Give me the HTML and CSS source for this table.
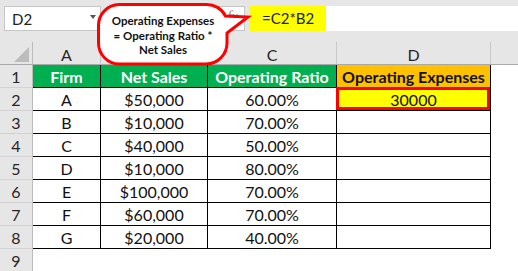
FILE: index.html
```html
<!DOCTYPE html>
<html>
<head>
<meta charset="utf-8">
<link rel="stylesheet" href="styles.css">
</head>
<body>
<div class="app">
  <div class="fbar">
    <div class="namebox"><span class="nb-text">D2</span><span class="caret"></span></div>
    <div class="fxbox"><span class="fx">fx</span></div>
    <div class="finput"><span class="formula">=C2*B2</span></div>
  </div>
  <div class="sheet">
    <div class="corner"><span class="tri"></span></div>
    <div class="ch">A</div><div class="ch">B</div><div class="ch">C</div><div class="ch">D</div><div class="ch ch-last"></div>

    <div class="rh">1</div>
    <div class="c hg">Firm</div><div class="c hg">Net Sales</div><div class="c hg">Operating Ratio</div><div class="c ho">Operating Expenses</div><div class="e"></div>

    <div class="rh">2</div>
    <div class="c">A</div><div class="c">$50,000</div><div class="c">60.00%</div><div class="c sel">30000</div><div class="e"></div>
    <div class="rh">3</div>
    <div class="c">B</div><div class="c">$10,000</div><div class="c">70.00%</div><div class="c"></div><div class="e"></div>
    <div class="rh">4</div>
    <div class="c">C</div><div class="c">$40,000</div><div class="c">50.00%</div><div class="c"></div><div class="e"></div>
    <div class="rh">5</div>
    <div class="c">D</div><div class="c">$10,000</div><div class="c">80.00%</div><div class="c"></div><div class="e"></div>
    <div class="rh">6</div>
    <div class="c">E</div><div class="c">$100,000</div><div class="c">70.00%</div><div class="c"></div><div class="e"></div>
    <div class="rh">7</div>
    <div class="c">F</div><div class="c">$60,000</div><div class="c">70.00%</div><div class="c"></div><div class="e"></div>
    <div class="rh">8</div>
    <div class="c">G</div><div class="c">$20,000</div><div class="c">40.00%</div><div class="c"></div><div class="e"></div>
    <div class="rh">9</div>
    <div class="e"></div><div class="e"></div><div class="e"></div><div class="e"></div><div class="e"></div>
  </div>
  <div class="callout">
    <svg class="bubble" width="160" height="70" viewBox="94 0 160 70">
      <path d="M119 4.5 H206 A21 21 0 0 1 225.5 16 L248 17 L227 33 V43 A21 21 0 0 1 206 64 H119 A21 21 0 0 1 98.5 43 V25 A21 21 0 0 1 119 4.5 Z" fill="#fff" stroke="#ff0000" stroke-width="3" stroke-linejoin="miter"/>
    </svg>
    <div class="callout-text">Operating Expenses<br>= Operating Ratio *<br>Net Sales</div>
  </div>
</div>
</body>
</html>
```
FILE: styles.css
```css
html, body {
  margin: 0;
  padding: 0;
}
body {
  width: 518px;
  height: 271px;
  overflow: hidden;
  background: #ffffff;
  font-family: Lato, "Liberation Sans", sans-serif;
}
.app {
  position: relative;
  width: 518px;
  height: 271px;
  overflow: hidden;
}
.fbar {
  height: 42px;
  box-sizing: border-box;
  padding: 6px 0 11px 4px;
  background: #e6e6e6;
  display: flex;
  align-items: stretch;
}
.namebox {
  width: 97px;
  background: #fff;
  border: 1px solid #c6c6c6;
  box-sizing: border-box;
  display: flex;
  align-items: center;
  justify-content: space-between;
  padding: 0 4px 0 7px;
  font-size: 15px;
  color: #222;
}
.caret {
  width: 0;
  height: 0;
  border-left: 3px solid transparent;
  border-right: 3px solid transparent;
  border-top: 4px solid #555;
  margin-top: -4px;
}
.fxbox {
  width: 40px;
  margin-left: 104px;
  background: #fff;
  border: 1px solid #c6c6c6;
  box-sizing: border-box;
  display: flex;
  align-items: center;
  justify-content: flex-end;
  padding-right: 6px;
}
.fx {
  font-family: "Liberation Serif", serif;
  font-style: italic;
  font-size: 15px;
  color: #8a8a8a;
  margin-top: -4px;
}
.finput {
  flex: 1;
  margin-left: 4px;
  background: #fff;
  display: flex;
}
.formula {
  width: 77px;
  background: #ffff00;
  box-sizing: border-box;
  padding-left: 13px;
  font-size: 15px;
  line-height: 25px;
  color: #222;
}
.sheet {
  display: grid;
  grid-template-columns: 33px 68px 107px 129px 154px 27px;
  grid-auto-rows: 23px;
  font-size: 16px;
}
.corner {
  background: #e6e6e6;
  border-right: 1px solid #bcbcbc;
  border-bottom: 1px solid #a9a9a9;
  box-sizing: border-box;
  display: flex;
  align-items: flex-end;
  justify-content: flex-end;
  padding: 0 3px 2px 0;
}
.tri {
  width: 15px;
  height: 15px;
  background: #bcbcbc;
  clip-path: polygon(100% 0, 100% 100%, 0 100%);
}
.ch {
  background: #e6e6e6;
  border-right: 1px solid #c8c8c8;
  border-bottom: 1px solid #a9a9a9;
  box-sizing: border-box;
  display: flex;
  align-items: center;
  justify-content: center;
  padding-top: 2px;
  font-size: 16px;
  color: #262626;
}
.ch-last {
  border-right: none;
}
.rh {
  background: #e6e6e6;
  border-right: 1px solid #bcbcbc;
  border-bottom: 1px solid #d2d2d2;
  box-sizing: border-box;
  display: flex;
  align-items: center;
  justify-content: center;
  font-size: 16px;
  color: #262626;
}
.c {
  border-right: 1px solid #000;
  border-bottom: 1px solid #000;
  box-sizing: border-box;
  display: flex;
  align-items: center;
  justify-content: center;
  color: #111;
  white-space: nowrap;
  position: relative;
}
.hg {
  background: #00b050;
  color: #fff;
  font-weight: 700;
}
.ho {
  background: #ffc000;
  color: #111;
  font-weight: 700;
}
.sel {
  background: #ffff00;
}
.sel::after {
  content: "";
  position: absolute;
  top: -1px;
  left: -1px;
  right: 0;
  bottom: 0;
  border: 3px solid #ff0000;
}
.e {
  background: #fff;
}
.callout {
  position: absolute;
  left: 94px;
  top: 0;
  width: 160px;
  height: 70px;
}
.bubble {
  position: absolute;
  left: 0;
  top: 0;
}
.callout-text {
  position: absolute;
  left: 4px;
  top: 14px;
  width: 130px;
  text-align: center;
  font-size: 11.5px;
  line-height: 14.5px;
  font-weight: 700;
  color: #111;
}
```
